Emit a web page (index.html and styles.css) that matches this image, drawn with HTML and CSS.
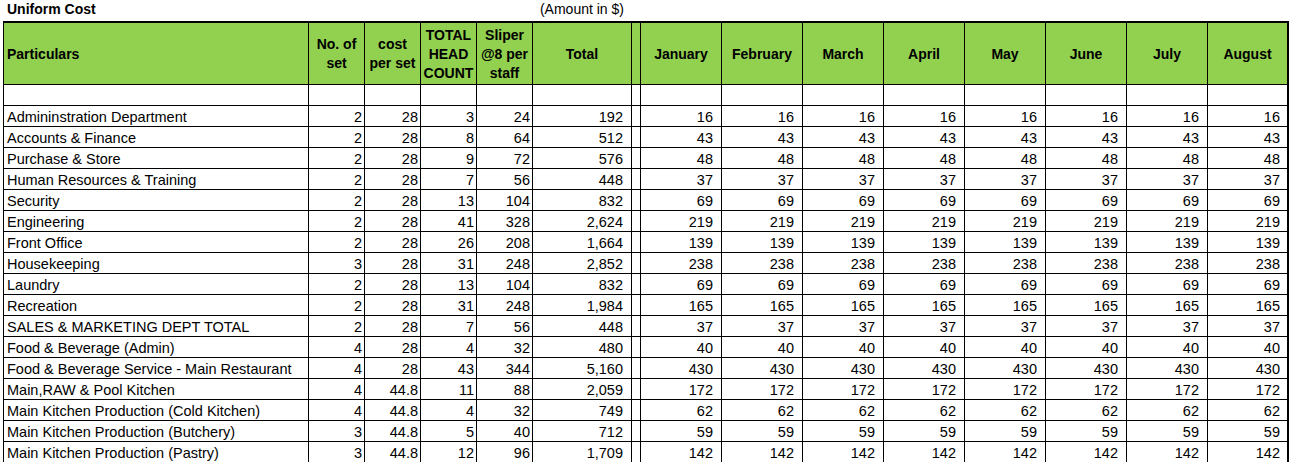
FILE: index.html
```html
<!DOCTYPE html>
<html>
<head>
<meta charset="utf-8">
<title>Uniform Cost</title>
<link rel="stylesheet" href="styles.css">
</head>
<body>
<div class="sheet">
  <div class="title-row">
    <div class="title">Uniform Cost</div>
    <div class="blank"></div><div class="blank"></div><div class="blank"></div><div class="blank"></div>
    <div class="amount">(Amount in $)</div>
  </div>
  <div class="table">
    <div class="row head">
      <div class="c left">Particulars</div>
      <div class="c">No. of<br>set</div>
      <div class="c">cost<br>per set</div>
      <div class="c">TOTAL<br>HEAD<br>COUNT</div>
      <div class="c">Sliper<br>@8 per<br>staff</div>
      <div class="c">Total</div>
      <div class="c"></div>
      <div class="c">January</div>
      <div class="c">February</div>
      <div class="c">March</div>
      <div class="c">April</div>
      <div class="c">May</div>
      <div class="c">June</div>
      <div class="c">July</div>
      <div class="c">August</div>
    </div>
    <div class="row body">
      <div class="c"></div><div class="c"></div><div class="c"></div><div class="c"></div><div class="c"></div><div class="c"></div><div class="c"></div><div class="c"></div><div class="c"></div><div class="c"></div><div class="c"></div><div class="c"></div><div class="c"></div><div class="c"></div><div class="c"></div>
    </div>
    <div class="row body"><div class="c t">Admininstration Department</div><div class="c">2</div><div class="c">28</div><div class="c">3</div><div class="c">24</div><div class="c">192</div><div class="c"></div><div class="c">16</div><div class="c">16</div><div class="c">16</div><div class="c">16</div><div class="c">16</div><div class="c">16</div><div class="c">16</div><div class="c">16</div></div>
    <div class="row body"><div class="c t">Accounts &amp; Finance</div><div class="c">2</div><div class="c">28</div><div class="c">8</div><div class="c">64</div><div class="c">512</div><div class="c"></div><div class="c">43</div><div class="c">43</div><div class="c">43</div><div class="c">43</div><div class="c">43</div><div class="c">43</div><div class="c">43</div><div class="c">43</div></div>
    <div class="row body"><div class="c t">Purchase &amp; Store</div><div class="c">2</div><div class="c">28</div><div class="c">9</div><div class="c">72</div><div class="c">576</div><div class="c"></div><div class="c">48</div><div class="c">48</div><div class="c">48</div><div class="c">48</div><div class="c">48</div><div class="c">48</div><div class="c">48</div><div class="c">48</div></div>
    <div class="row body"><div class="c t">Human Resources &amp; Training</div><div class="c">2</div><div class="c">28</div><div class="c">7</div><div class="c">56</div><div class="c">448</div><div class="c"></div><div class="c">37</div><div class="c">37</div><div class="c">37</div><div class="c">37</div><div class="c">37</div><div class="c">37</div><div class="c">37</div><div class="c">37</div></div>
    <div class="row body"><div class="c t">Security</div><div class="c">2</div><div class="c">28</div><div class="c">13</div><div class="c">104</div><div class="c">832</div><div class="c"></div><div class="c">69</div><div class="c">69</div><div class="c">69</div><div class="c">69</div><div class="c">69</div><div class="c">69</div><div class="c">69</div><div class="c">69</div></div>
    <div class="row body"><div class="c t">Engineering</div><div class="c">2</div><div class="c">28</div><div class="c">41</div><div class="c">328</div><div class="c">2,624</div><div class="c"></div><div class="c">219</div><div class="c">219</div><div class="c">219</div><div class="c">219</div><div class="c">219</div><div class="c">219</div><div class="c">219</div><div class="c">219</div></div>
    <div class="row body"><div class="c t">Front Office</div><div class="c">2</div><div class="c">28</div><div class="c">26</div><div class="c">208</div><div class="c">1,664</div><div class="c"></div><div class="c">139</div><div class="c">139</div><div class="c">139</div><div class="c">139</div><div class="c">139</div><div class="c">139</div><div class="c">139</div><div class="c">139</div></div>
    <div class="row body"><div class="c t">Housekeeping</div><div class="c">3</div><div class="c">28</div><div class="c">31</div><div class="c">248</div><div class="c">2,852</div><div class="c"></div><div class="c">238</div><div class="c">238</div><div class="c">238</div><div class="c">238</div><div class="c">238</div><div class="c">238</div><div class="c">238</div><div class="c">238</div></div>
    <div class="row body"><div class="c t">Laundry</div><div class="c">2</div><div class="c">28</div><div class="c">13</div><div class="c">104</div><div class="c">832</div><div class="c"></div><div class="c">69</div><div class="c">69</div><div class="c">69</div><div class="c">69</div><div class="c">69</div><div class="c">69</div><div class="c">69</div><div class="c">69</div></div>
    <div class="row body"><div class="c t">Recreation</div><div class="c">2</div><div class="c">28</div><div class="c">31</div><div class="c">248</div><div class="c">1,984</div><div class="c"></div><div class="c">165</div><div class="c">165</div><div class="c">165</div><div class="c">165</div><div class="c">165</div><div class="c">165</div><div class="c">165</div><div class="c">165</div></div>
    <div class="row body"><div class="c t">SALES &amp; MARKETING DEPT TOTAL</div><div class="c">2</div><div class="c">28</div><div class="c">7</div><div class="c">56</div><div class="c">448</div><div class="c"></div><div class="c">37</div><div class="c">37</div><div class="c">37</div><div class="c">37</div><div class="c">37</div><div class="c">37</div><div class="c">37</div><div class="c">37</div></div>
    <div class="row body"><div class="c t">Food &amp; Beverage (Admin)</div><div class="c">4</div><div class="c">28</div><div class="c">4</div><div class="c">32</div><div class="c">480</div><div class="c"></div><div class="c">40</div><div class="c">40</div><div class="c">40</div><div class="c">40</div><div class="c">40</div><div class="c">40</div><div class="c">40</div><div class="c">40</div></div>
    <div class="row body"><div class="c t">Food &amp; Beverage Service - Main Restaurant</div><div class="c">4</div><div class="c">28</div><div class="c">43</div><div class="c">344</div><div class="c">5,160</div><div class="c"></div><div class="c">430</div><div class="c">430</div><div class="c">430</div><div class="c">430</div><div class="c">430</div><div class="c">430</div><div class="c">430</div><div class="c">430</div></div>
    <div class="row body"><div class="c t">Main,RAW &amp; Pool Kitchen</div><div class="c">4</div><div class="c">44.8</div><div class="c">11</div><div class="c">88</div><div class="c">2,059</div><div class="c"></div><div class="c">172</div><div class="c">172</div><div class="c">172</div><div class="c">172</div><div class="c">172</div><div class="c">172</div><div class="c">172</div><div class="c">172</div></div>
    <div class="row body"><div class="c t">Main Kitchen Production (Cold Kitchen)</div><div class="c">4</div><div class="c">44.8</div><div class="c">4</div><div class="c">32</div><div class="c">749</div><div class="c"></div><div class="c">62</div><div class="c">62</div><div class="c">62</div><div class="c">62</div><div class="c">62</div><div class="c">62</div><div class="c">62</div><div class="c">62</div></div>
    <div class="row body"><div class="c t">Main Kitchen Production (Butchery)</div><div class="c">3</div><div class="c">44.8</div><div class="c">5</div><div class="c">40</div><div class="c">712</div><div class="c"></div><div class="c">59</div><div class="c">59</div><div class="c">59</div><div class="c">59</div><div class="c">59</div><div class="c">59</div><div class="c">59</div><div class="c">59</div></div>
    <div class="row body"><div class="c t">Main Kitchen Production (Pastry)</div><div class="c">3</div><div class="c">44.8</div><div class="c">12</div><div class="c">96</div><div class="c">1,709</div><div class="c"></div><div class="c">142</div><div class="c">142</div><div class="c">142</div><div class="c">142</div><div class="c">142</div><div class="c">142</div><div class="c">142</div><div class="c">142</div></div>
  </div>
</div>
</body>
</html>
```
FILE: styles.css
```css
html, body {
  margin: 0;
  padding: 0;
  background: #ffffff;
}

body {
  font-family: "Liberation Sans", Arial, sans-serif;
  color: #000000;
  overflow: hidden;
}

.sheet {
  padding-left: 3px;
}

.title-row,
.row {
  display: grid;
  grid-template-columns: 305px 56px 56px 56px 56px 99px 9px repeat(8, 81px);
}

.title-row {
  margin-left: 1px;
  height: 21px;
  font-size: 14px;
  line-height: 17px;
  padding-top: 1px;
  box-sizing: border-box;
}

.title {
  font-weight: bold;
  padding-left: 3px;
}

.amount {
  text-align: right;
  padding-right: 8px;
}

.table {
  border-left: 1px solid #000000;
  width: 1285px;
}

.c {
  box-sizing: border-box;
  border-right: 1px solid #000000;
  border-bottom: 1px solid #000000;
  overflow: hidden;
  white-space: nowrap;
}

.c:last-child {
  border-right-width: 2px;
}

.head {
  border-top: 2px solid #000000;
}

.head .c {
  background: #92d050;
  height: 62px;
  font-size: 14px;
  font-weight: bold;
  line-height: 19px;
  display: flex;
  align-items: center;
  justify-content: center;
  text-align: center;
  padding-top: 1px;
}

.head .c.left {
  justify-content: flex-start;
  padding-left: 3px;
}

.body .c {
  height: 21px;
  font-size: 14.5px;
  line-height: 17px;
  padding-top: 3px;
  padding-right: 2px;
  text-align: right;
}

.body .c:nth-child(n+6) {
  padding-right: 8px;
}

.body .c:last-child {
  padding-right: 7px;
}

.body .c.t {
  text-align: left;
  padding-left: 3px;
  padding-right: 0;
}
```
